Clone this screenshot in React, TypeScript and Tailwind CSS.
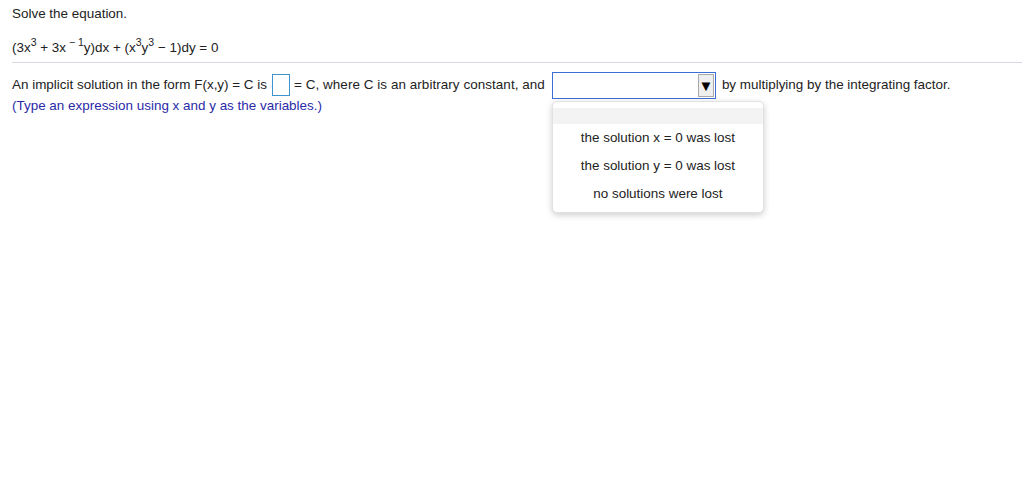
export default function App() {
  const options = ['the solution x = 0 was lost', 'the solution y = 0 was lost', 'no solutions were lost'];
  const sup = 'text-[10.5px] relative -top-[6px]';

  return (
    <div className="min-h-[503px] w-[1024px] bg-white text-[13.45px] leading-[16px] text-[#222] font-['Liberation_Sans',Arial,sans-serif]">
      <div className="pl-[12px] pr-[2px]">
        <div className="pt-[6px]">Solve the equation.</div>

        <div className="mt-[16px] h-[18px] flex items-end">
          <span>
            (3x<sup className={sup}>3</sup> + 3x<sup className={sup}> − 1</sup>y)dx + (x<sup className={sup}>3</sup>y<sup className={sup}>3</sup> − 1)dy = 0
          </span>
        </div>

        <div className="mt-[6px] border-t border-[#d6dae4]" />

        <div className="mt-[9px] flex items-center h-[26px]">
          <span>An implicit solution in the form F(x,y) = C is</span>
          <span className="ml-[5px] mr-[4px] inline-block w-[18px] h-[22px] border border-[#3d95cf] bg-white" />
          <span className="tracking-[0.06px]">= C, where C is an arbitrary constant, and</span>

          <div className="relative ml-[7px]">
            <div className="w-[164px] h-[27px] border border-[#3b6fd6] bg-white flex items-center justify-end pr-[1px]">
              <div className="w-[16px] h-[23px] border border-[#a9a9a9] bg-[#efefef] flex items-center justify-center">
                <span className="text-[15px] leading-none text-black">▼</span>
              </div>
            </div>

            <div className="absolute left-0 top-[29px] w-[212px] h-[112px] bg-white rounded-[5px] border border-[#e2e2e2] shadow-[0_2px_6px_rgba(0,0,0,0.2)] pt-[6px] z-10">
              <div className="h-[16px] bg-[#f3f3f3]" />
              <div className="flex flex-col items-center">
                {options.map((o) => (
                  <div key={o} className="h-[28px] flex items-center justify-center w-full">
                    {o}
                  </div>
                ))}
              </div>
            </div>
          </div>

          <span className="ml-[6px]">by multiplying by the integrating factor.</span>
        </div>

        <div className="mt-[0px] text-[#2a2aa8]">(Type an expression using x and y as the variables.)</div>
      </div>
    </div>
  );
}
